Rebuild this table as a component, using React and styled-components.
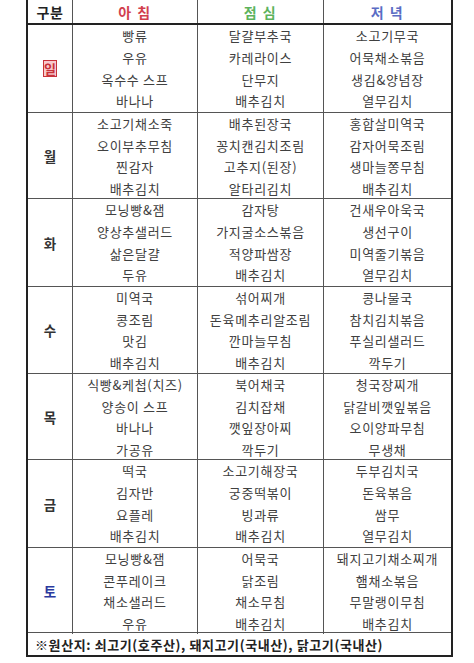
import React from 'react';
import styled, { createGlobalStyle } from 'styled-components';

const GlobalStyle = createGlobalStyle`
  html, body {
    margin: 0;
    padding: 0;
    background: #FFFFFF;
  }
  body {
    font-family: 'Noto Sans CJK KR', 'Noto Sans', sans-serif;
    color: #333;
  }
`;

const Page = styled.div`
  width: 474px;
  height: 663px;
  background: #FFF;
  padding-left: 26px;
  box-sizing: border-box;
`;

const Table = styled.div`
  width: 427px;
  border: 2px solid #222;
  border-top: none;
  box-sizing: border-box;
`;

const Row = styled.div`
  display: grid;
  grid-template-columns: 44px 125px 126px 1fr;
  height: ${p => p.$h}px;
  border-bottom: ${p => (p.$thick ? '2px solid #222' : '1px solid #555')};
`;

const Cell = styled.div`
  display: flex;
  flex-direction: column;
  align-items: center;
  justify-content: center;
  border-left: ${p => (p.$first ? 'none' : '1px solid #555')};
`;

const HeadText = styled.span`
  font-size: 14px;
  font-weight: 700;
  letter-spacing: ${p => (p.$spaced ? '1.5px' : '0.5px')};
  color: ${p => p.$color || '#222'};
  white-space: pre;
`;

const DayText = styled.span`
  font-size: 13.5px;
  font-weight: 700;
  color: ${p => p.$color || '#333'};
`;

const DayBox = styled.span`
  display: inline-flex;
  align-items: center;
  justify-content: center;
  width: 14px;
  height: 17px;
  font-size: 13px;
  font-weight: 700;
  color: #c8323a;
  background: #f7c9cc;
  border: 1px solid #c8323a;
  box-sizing: border-box;
`;

const Item = styled.div`
  height: 21.6px;
  line-height: 21.6px;
  font-size: 13px;
  letter-spacing: 0.7px;
  color: #404040;
  white-space: nowrap;
`;

const Footer = styled.div`
  height: 22px;
  display: flex;
  align-items: center;
  padding-left: 7px;
  font-size: 13px;
  font-weight: 700;
  letter-spacing: 0.6px;
  color: #222;
  white-space: nowrap;
`;

const days = [
  {
    day: '일', color: '#c8323a', boxed: true, h: 87,
    meals: [
      ['빵류', '우유', '옥수수 스프', '바나나'],
      ['달걀부추국', '카레라이스', '단무지', '배추김치'],
      ['소고기무국', '어묵채소볶음', '생김&양념장', '열무김치'],
    ],
  },
  {
    day: '월', h: 85,
    meals: [
      ['소고기채소죽', '오이부추무침', '찐감자', '배추김치'],
      ['배추된장국', '꽁치캔김치조림', '고추지(된장)', '알타리김치'],
      ['홍합살미역국', '감자어묵조림', '생마늘쫑무침', '배추김치'],
    ],
  },
  {
    day: '화', h: 87,
    meals: [
      ['모닝빵&잼', '양상추샐러드', '삶은달걀', '두유'],
      ['감자탕', '가지굴소스볶음', '적양파쌈장', '배추김치'],
      ['건새우아욱국', '생선구이', '미역줄기볶음', '열무김치'],
    ],
  },
  {
    day: '수', h: 86,
    meals: [
      ['미역국', '콩조림', '맛김', '배추김치'],
      ['섞어찌개', '돈육메추리알조림', '깐마늘무침', '배추김치'],
      ['콩나물국', '참치김치볶음', '푸실리샐러드', '깍두기'],
    ],
  },
  {
    day: '목', h: 85,
    meals: [
      ['식빵&케첩(치즈)', '양송이 스프', '바나나', '가공유'],
      ['북어채국', '김치잡채', '깻잎장아찌', '깍두기'],
      ['청국장찌개', '닭갈비깻잎볶음', '오이양파무침', '무생채'],
    ],
  },
  {
    day: '금', h: 87,
    meals: [
      ['떡국', '김자반', '요플레', '배추김치'],
      ['소고기해장국', '궁중떡볶이', '빙과류', '배추김치'],
      ['두부김치국', '돈육볶음', '쌈무', '열무김치'],
    ],
  },
  {
    day: '토', color: '#2b3a9e', h: 84,
    meals: [
      ['모닝빵&잼', '콘푸레이크', '채소샐러드', '우유'],
      ['어묵국', '닭조림', '채소무침', '배추김치'],
      ['돼지고기채소찌개', '햄채소볶음', '무말랭이무침', '배추김치'],
    ],
  },
];

function DayRow({ d }) {
  return (
    <Row $h={d.h}>
      <Cell $first>
        {d.boxed ? <DayBox>{d.day}</DayBox> : <DayText $color={d.color}>{d.day}</DayText>}
      </Cell>
      {d.meals.map((list, i) => (
        <Cell key={i}>
          {list.map((m, j) => (
            <Item key={j}>{m}</Item>
          ))}
        </Cell>
      ))}
    </Row>
  );
}

export default function App() {
  return (
    <Page>
      <GlobalStyle />
      <Table>
        <Row $h={23} $thick>
          <Cell $first><HeadText>구분</HeadText></Cell>
          <Cell><HeadText $color="#d23f4e" $spaced>아 침</HeadText></Cell>
          <Cell><HeadText $color="#5cb35c" $spaced>점 심</HeadText></Cell>
          <Cell><HeadText $color="#5a6cc4" $spaced>저 녁</HeadText></Cell>
        </Row>
        {days.map(d => (
          <DayRow key={d.day} d={d} />
        ))}
        <Footer>※원산지: 쇠고기(호주산), 돼지고기(국내산), 닭고기(국내산)</Footer>
      </Table>
    </Page>
  );
}
